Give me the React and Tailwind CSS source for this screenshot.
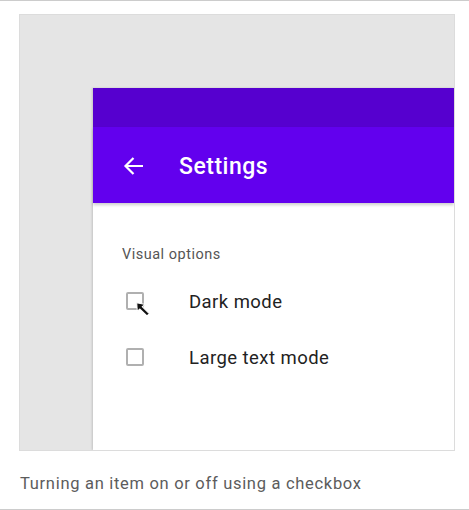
import React from 'react';

function Checkbox({ children }) {
  return (
    <div className="relative flex h-[18px] w-[18px] items-center justify-center">
      <div className="h-[18px] w-[18px] rounded-[2px] border-2 border-[#b0b0b0] bg-white" />
      {children}
    </div>
  );
}

function Cursor() {
  return (
    <svg className="absolute left-[9px] top-[9px]" width="16" height="16" viewBox="0 0 14 14">
      <path d="M1.5 1.5 L2 9 L4.3 7 L10.5 13 L12.5 11 L6.3 5 L9 3 Z" fill="#111" stroke="#fff" strokeWidth="0.9" strokeLinejoin="round" />
    </svg>
  );
}

export default function App() {
  return (
    <div className="w-[469px] h-[510px] bg-white font-['Roboto',sans-serif] border-t border-[#cccccc]">
      <div className="pt-[13px] pl-[19px]">
        <div className="w-[436px] h-[437px] bg-[#e5e5e5] border border-[#dcdcdc] overflow-hidden pl-[73px] pt-[73px]">
          <div className="h-full bg-white flex flex-col shadow-[-1px_0_2px_rgba(0,0,0,0.15)]">
            <div className="h-[39px] bg-[#5600cf]" />
            <div className="h-[76px] bg-[#6200ee] flex items-center shadow-[0_2px_3px_rgba(0,0,0,0.2)] relative z-10">
              <svg className="ml-[30px] mt-[2px]" width="22" height="22" viewBox="0 0 22 22">
                <path d="M20 11H2.5M10.5 3L2.5 11L10.5 19" fill="none" stroke="#fff" strokeWidth="2.2" />
              </svg>
              <span className="ml-[34px] pt-[4px] text-[23px] font-medium text-white tracking-[0.5px]">Settings</span>
            </div>
            <div className="pl-[29px] pt-[42px]">
              <div className="text-[14.5px] leading-[20px] text-[#555] tracking-[0.5px]">Visual options</div>
              <div className="mt-[26px] flex items-center h-[20px]">
                <div className="ml-[4px]">
                  <Checkbox>
                    <Cursor />
                  </Checkbox>
                </div>
                <span className="ml-[45px] pt-[4px] text-[18.5px] text-[#222] tracking-[0.45px]">Dark mode</span>
              </div>
              <div className="mt-[36px] flex items-center h-[20px]">
                <div className="ml-[4px]">
                  <Checkbox />
                </div>
                <span className="ml-[45px] pt-[4px] text-[18.5px] text-[#222] tracking-[0.45px]">Large text mode</span>
              </div>
            </div>
          </div>
        </div>
      </div>
      <div className="mt-[21px] ml-[20px] text-[16.5px] leading-[24px] text-[#5c5c5c] tracking-[0.7px]">
        Turning an item on or off using a checkbox
      </div>
      <div className="mt-[13px] border-t-2 border-[#cccccc]" />
    </div>
  );
}
